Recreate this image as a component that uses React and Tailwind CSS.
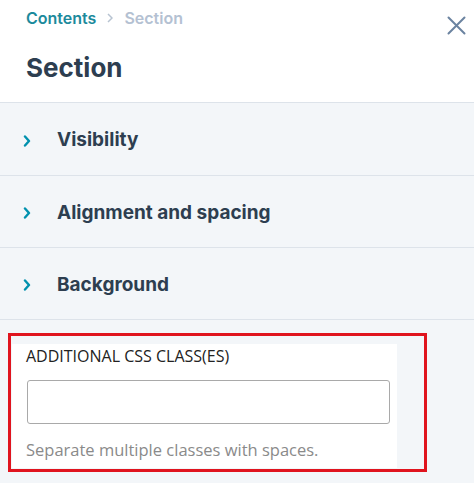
const filas = ["Visibility", "Alignment and spacing", "Background"];

function Chevron() {
  return (
    <svg width="8" height="12" viewBox="0 0 8 12" className="shrink-0">
      <path d="M2 1.5 L6 6 L2 10.5" fill="none" stroke="#0091ae" strokeWidth="2.4" strokeLinecap="round" strokeLinejoin="round" />
    </svg>
  );
}

export default function App() {
  return (
    <div
      className="relative w-[474px] h-[483px] overflow-hidden bg-[#f3f6f9]"
      style={{ fontFamily: "Inter, 'Noto Sans', sans-serif" }}
    >
      {/* cabecera */}
      <div className="h-[103px] bg-white border-b border-[#dde3ea] pl-[26px] pr-[8px]">
        <div className="flex items-start justify-between pt-[6px]">
          <div className="flex items-center gap-[11px] text-[16px] font-semibold">
            <span className="text-[#1c8a9c]">Contents</span>
            <svg width="6" height="10" viewBox="0 0 6 10">
              <path d="M1 1 L5 5 L1 9" fill="none" stroke="#b7c3d1" strokeWidth="1.5" />
            </svg>
            <span className="text-[#b4c1d2]">Section</span>
          </div>
          <svg width="19" height="19" viewBox="0 0 19 19" className="mt-[10px]">
            <path d="M1.5 1.5 L17.5 17.5 M17.5 1.5 L1.5 17.5" stroke="#6b83a0" strokeWidth="2" strokeLinecap="round" />
          </svg>
        </div>
        <h1 className="mt-[20px] text-[26px] font-bold text-[#2d3e50] leading-none">Section</h1>
      </div>

      {/* filas del acordeón */}
      {filas.map((f, i) => (
        <div
          key={f}
          className={`${i === 0 ? "h-[73px]" : "h-[72px]"} border-b border-[#dde3ea] flex items-center pl-[23px] pt-[3px]`}
        >
          <Chevron />
          <span className="ml-[26px] text-[19px] font-bold text-[#2d3e50]">{f}</span>
        </div>
      ))}

      {/* campo de clases */}
      <div
        className="mt-[24px] ml-[12px] w-[385px] h-[124px] bg-white pl-[14px] pt-[1px]"
        style={{ fontFamily: "'Open Sans', 'Noto Sans', sans-serif" }}
      >
        <label className="block text-[16px] text-[#222] leading-[22px]">ADDITIONAL CSS CLASS(ES)</label>
        <input
          type="text"
          className="mt-[13px] ml-[1px] block w-[363px] h-[44px] border border-[#a9a9a9] rounded-[3px] bg-white"
        />
        <p className="mt-[15px] text-[16.5px] text-[#8a8a8a] leading-[22px]">Separate multiple classes with spaces.</p>
      </div>

      {/* marco rojo */}
      <div className="absolute left-[8px] top-[333px] w-[419px] h-[139px] border-[3px] border-[#e0141e] pointer-events-none" />
    </div>
  );
}
